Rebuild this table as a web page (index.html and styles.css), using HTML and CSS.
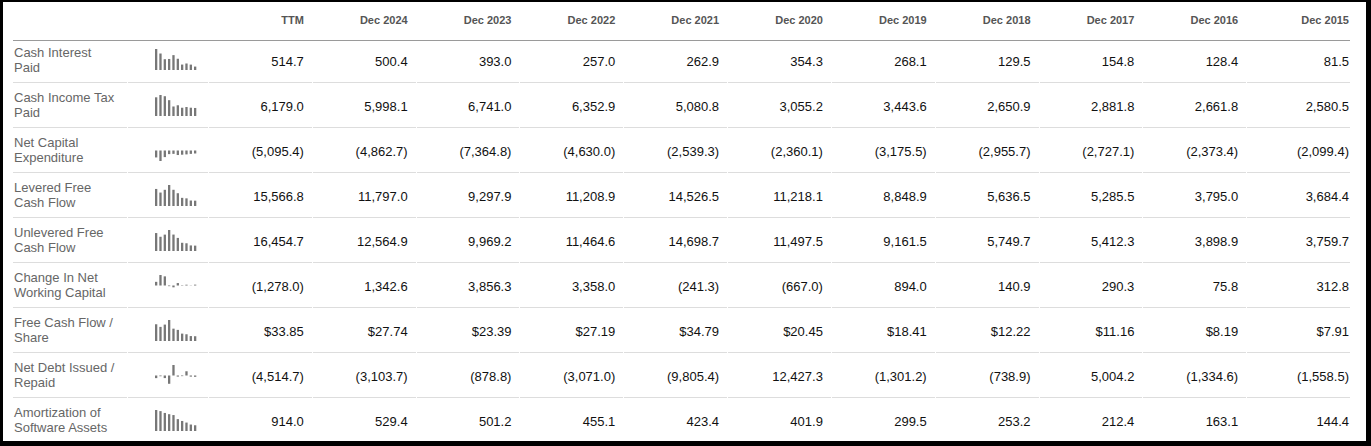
FILE: index.html
```html
<!DOCTYPE html>
<html>
<head>
<meta charset="utf-8">
<title>Cash Flow</title>
<link rel="stylesheet" href="styles.css">
</head>
<body>
<div class="frame">
  <div class="table">
    <div class="row head">
      <div class="h"></div><div class="h"></div>
      <div class="h">TTM</div><div class="h">Dec 2024</div><div class="h">Dec 2023</div><div class="h">Dec 2022</div><div class="h">Dec 2021</div><div class="h">Dec 2020</div><div class="h">Dec 2019</div><div class="h">Dec 2018</div><div class="h">Dec 2017</div><div class="h">Dec 2016</div><div class="h">Dec 2015</div>
    </div>

    <div class="row data first">
      <div class="label">Cash Interest Paid</div>
      <div class="spark"><svg width="44" height="22" viewBox="0 0 44 22"><g fill="#777">
        <rect x="0" y="0" width="2.3" height="21"/><rect x="4.33" y="4.51" width="2.3" height="16.49"/><rect x="8.67" y="10.21" width="2.3" height="10.79"/><rect x="13" y="9.97" width="2.3" height="11.03"/><rect x="17.33" y="6.13" width="2.3" height="14.87"/><rect x="21.67" y="9.75" width="2.3" height="11.25"/><rect x="26" y="15.57" width="2.3" height="5.43"/><rect x="30.33" y="14.5" width="2.3" height="6.5"/><rect x="34.67" y="15.61" width="2.3" height="5.39"/><rect x="39" y="17.58" width="2.3" height="3.42"/>
      </g></svg></div>
      <div class="num">514.7</div><div class="num">500.4</div><div class="num">393.0</div><div class="num">257.0</div><div class="num">262.9</div><div class="num">354.3</div><div class="num">268.1</div><div class="num">129.5</div><div class="num">154.8</div><div class="num">128.4</div><div class="num">81.5</div>
    </div>

    <div class="row data">
      <div class="label">Cash Income Tax Paid</div>
      <div class="spark"><svg width="44" height="22" viewBox="0 0 44 22"><g fill="#777">
        <rect x="0" y="2.31" width="2.3" height="18.69"/><rect x="4.33" y="0" width="2.3" height="21"/><rect x="8.67" y="1.21" width="2.3" height="19.79"/><rect x="13" y="5.17" width="2.3" height="15.83"/><rect x="17.33" y="11.48" width="2.3" height="9.52"/><rect x="21.67" y="10.27" width="2.3" height="10.73"/><rect x="26" y="12.74" width="2.3" height="8.26"/><rect x="30.33" y="12.02" width="2.3" height="8.98"/><rect x="34.67" y="12.71" width="2.3" height="8.29"/><rect x="39" y="12.96" width="2.3" height="8.04"/>
      </g></svg></div>
      <div class="num">6,179.0</div><div class="num">5,998.1</div><div class="num">6,741.0</div><div class="num">6,352.9</div><div class="num">5,080.8</div><div class="num">3,055.2</div><div class="num">3,443.6</div><div class="num">2,650.9</div><div class="num">2,881.8</div><div class="num">2,661.8</div><div class="num">2,580.5</div>
    </div>

    <div class="row data">
      <div class="label">Net Capital Expenditure</div>
      <div class="spark"><svg width="44" height="22" viewBox="0 0 44 22"><g fill="#777">
        <rect x="0" y="10.5" width="2.3" height="6.93"/><rect x="4.33" y="10.5" width="2.3" height="10.5"/><rect x="8.67" y="10.5" width="2.3" height="6.6"/><rect x="13" y="10.5" width="2.3" height="3.62"/><rect x="17.33" y="10.5" width="2.3" height="3.36"/><rect x="21.67" y="10.5" width="2.3" height="4.53"/><rect x="26" y="10.5" width="2.3" height="4.21"/><rect x="30.33" y="10.5" width="2.3" height="3.89"/><rect x="34.67" y="10.5" width="2.3" height="3.38"/><rect x="39" y="10.5" width="2.3" height="2.99"/>
      </g></svg></div>
      <div class="num">(5,095.4)</div><div class="num">(4,862.7)</div><div class="num">(7,364.8)</div><div class="num">(4,630.0)</div><div class="num">(2,539.3)</div><div class="num">(2,360.1)</div><div class="num">(3,175.5)</div><div class="num">(2,955.7)</div><div class="num">(2,727.1)</div><div class="num">(2,373.4)</div><div class="num">(2,099.4)</div>
    </div>

    <div class="row data">
      <div class="label">Levered Free Cash Flow</div>
      <div class="spark"><svg width="44" height="22" viewBox="0 0 44 22"><g fill="#777">
        <rect x="0" y="3.95" width="2.3" height="17.05"/><rect x="4.33" y="7.56" width="2.3" height="13.44"/><rect x="8.67" y="4.8" width="2.3" height="16.2"/><rect x="13" y="0" width="2.3" height="21"/><rect x="17.33" y="4.78" width="2.3" height="16.22"/><rect x="21.67" y="8.21" width="2.3" height="12.79"/><rect x="26" y="12.85" width="2.3" height="8.15"/><rect x="30.33" y="13.36" width="2.3" height="7.64"/><rect x="34.67" y="15.51" width="2.3" height="5.49"/><rect x="39" y="15.67" width="2.3" height="5.33"/>
      </g></svg></div>
      <div class="num">15,566.8</div><div class="num">11,797.0</div><div class="num">9,297.9</div><div class="num">11,208.9</div><div class="num">14,526.5</div><div class="num">11,218.1</div><div class="num">8,848.9</div><div class="num">5,636.5</div><div class="num">5,285.5</div><div class="num">3,795.0</div><div class="num">3,684.4</div>
    </div>

    <div class="row data">
      <div class="label">Unlevered Free Cash Flow</div>
      <div class="spark"><svg width="44" height="22" viewBox="0 0 44 22"><g fill="#777">
        <rect x="0" y="3.05" width="2.3" height="17.95"/><rect x="4.33" y="6.76" width="2.3" height="14.24"/><rect x="8.67" y="4.62" width="2.3" height="16.38"/><rect x="13" y="0" width="2.3" height="21"/><rect x="17.33" y="4.57" width="2.3" height="16.43"/><rect x="21.67" y="7.91" width="2.3" height="13.09"/><rect x="26" y="12.79" width="2.3" height="8.21"/><rect x="30.33" y="13.27" width="2.3" height="7.73"/><rect x="34.67" y="15.43" width="2.3" height="5.57"/><rect x="39" y="15.63" width="2.3" height="5.37"/>
      </g></svg></div>
      <div class="num">16,454.7</div><div class="num">12,564.9</div><div class="num">9,969.2</div><div class="num">11,464.6</div><div class="num">14,698.7</div><div class="num">11,497.5</div><div class="num">9,161.5</div><div class="num">5,749.7</div><div class="num">5,412.3</div><div class="num">3,898.9</div><div class="num">3,759.7</div>
    </div>

    <div class="row data">
      <div class="label">Change In Net Working Capital</div>
      <div class="spark"><svg width="44" height="22" viewBox="0 0 44 22"><g fill="#777">
        <rect x="0" y="6.84" width="2.3" height="3.66"/><rect x="4.33" y="0" width="2.3" height="10.5"/><rect x="8.67" y="1.36" width="2.3" height="9.14"/><rect x="13" y="10.5" width="2.3" height="0.66"/><rect x="17.33" y="10.5" width="2.3" height="1.82"/><rect x="21.67" y="8.07" width="2.3" height="2.43"/><rect x="26" y="10.12" width="2.3" height="0.38"/><rect x="30.33" y="9.71" width="2.3" height="0.79"/><rect x="34.67" y="10.29" width="2.3" height="0.21"/><rect x="39" y="9.65" width="2.3" height="0.85"/>
      </g></svg></div>
      <div class="num">(1,278.0)</div><div class="num">1,342.6</div><div class="num">3,856.3</div><div class="num">3,358.0</div><div class="num">(241.3)</div><div class="num">(667.0)</div><div class="num">894.0</div><div class="num">140.9</div><div class="num">290.3</div><div class="num">75.8</div><div class="num">312.8</div>
    </div>

    <div class="row data">
      <div class="label">Free Cash Flow / Share</div>
      <div class="spark"><svg width="44" height="22" viewBox="0 0 44 22"><g fill="#777">
        <rect x="0" y="4.26" width="2.3" height="16.74"/><rect x="4.33" y="6.88" width="2.3" height="14.12"/><rect x="8.67" y="4.59" width="2.3" height="16.41"/><rect x="13" y="0" width="2.3" height="21"/><rect x="17.33" y="8.66" width="2.3" height="12.34"/><rect x="21.67" y="9.89" width="2.3" height="11.11"/><rect x="26" y="13.62" width="2.3" height="7.38"/><rect x="30.33" y="14.26" width="2.3" height="6.74"/><rect x="34.67" y="16.06" width="2.3" height="4.94"/><rect x="39" y="16.23" width="2.3" height="4.77"/>
      </g></svg></div>
      <div class="num">$33.85</div><div class="num">$27.74</div><div class="num">$23.39</div><div class="num">$27.19</div><div class="num">$34.79</div><div class="num">$20.45</div><div class="num">$18.41</div><div class="num">$12.22</div><div class="num">$11.16</div><div class="num">$8.19</div><div class="num">$7.91</div>
    </div>

    <div class="row data">
      <div class="label">Net Debt Issued / Repaid</div>
      <div class="spark"><svg width="44" height="22" viewBox="0 0 44 22"><g fill="#777">
        <rect x="0" y="10.5" width="2.3" height="2.62"/><rect x="4.33" y="10.5" width="2.3" height="0.74"/><rect x="8.67" y="10.5" width="2.3" height="2.59"/><rect x="13" y="10.5" width="2.3" height="8.28"/><rect x="17.33" y="0" width="2.3" height="10.5"/><rect x="21.67" y="10.5" width="2.3" height="1.1"/><rect x="26" y="10.5" width="2.3" height="0.62"/><rect x="30.33" y="6.27" width="2.3" height="4.23"/><rect x="34.67" y="10.5" width="2.3" height="1.13"/><rect x="39" y="10.5" width="2.3" height="1.32"/>
      </g></svg></div>
      <div class="num">(4,514.7)</div><div class="num">(3,103.7)</div><div class="num">(878.8)</div><div class="num">(3,071.0)</div><div class="num">(9,805.4)</div><div class="num">12,427.3</div><div class="num">(1,301.2)</div><div class="num">(738.9)</div><div class="num">5,004.2</div><div class="num">(1,334.6)</div><div class="num">(1,558.5)</div>
    </div>

    <div class="row data">
      <div class="label">Amortization of Software Assets</div>
      <div class="spark"><svg width="44" height="22" viewBox="0 0 44 22"><g fill="#777">
        <rect x="0" y="0" width="2.3" height="21"/><rect x="4.33" y="1.12" width="2.3" height="19.88"/><rect x="8.67" y="2.95" width="2.3" height="18.05"/><rect x="13" y="4.2" width="2.3" height="16.8"/><rect x="17.33" y="5.06" width="2.3" height="15.94"/><rect x="21.67" y="9.12" width="2.3" height="11.88"/><rect x="26" y="10.96" width="2.3" height="10.04"/><rect x="30.33" y="12.57" width="2.3" height="8.43"/><rect x="34.67" y="14.53" width="2.3" height="6.47"/><rect x="39" y="15.27" width="2.3" height="5.73"/>
      </g></svg></div>
      <div class="num">914.0</div><div class="num">529.4</div><div class="num">501.2</div><div class="num">455.1</div><div class="num">423.4</div><div class="num">401.9</div><div class="num">299.5</div><div class="num">253.2</div><div class="num">212.4</div><div class="num">163.1</div><div class="num">144.4</div>
    </div>
  </div>
</div>
</body>
</html>
```

FILE: styles.css
```css
html, body {
  margin: 0;
  padding: 0;
  background: #000;
  height: 446px;
  overflow: hidden;
}

.frame {
  margin: 2px 5px 0 3px;
  height: 439px;
  background: #fff;
  padding: 0 16px 0 10px;
  overflow: hidden;
  font-family: "Liberation Sans", Arial, sans-serif;
}

.table {
  width: 1337px;
}

.row {
  display: grid;
  grid-template-columns: 114px 80px repeat(11, 1fr);
  column-gap: 1px;
  box-sizing: border-box;
}

.row > div {
  box-sizing: border-box;
  display: flex;
  align-items: center;
}

.head {
  height: 39px;
  border-bottom: 1px solid #9a9a9a;
}

.head .h {
  align-items: flex-end;
  justify-content: flex-end;
  padding: 0 8px 13px 0;
  font-size: 11px;
  line-height: 13px;
  font-weight: bold;
  color: #555;
}

.head .h:last-child {
  padding-right: 1px;
}

.data {
  height: 45px;
}

.data.first {
  height: 42px;
}

.data > div {
  border-bottom: 1px solid #ddd;
}

.label {
  padding: 0 9px 0 1px;
  font-size: 13px;
  line-height: 15px;
  color: #666;
}

.spark {
  padding-left: 27px;
  padding-top: 1px;
}

.spark svg {
  display: block;
}

.num {
  justify-content: flex-end;
  padding-top: 3px;
  padding-right: 8px;
  font-size: 13px;
  line-height: 15px;
  color: #111;
  white-space: nowrap;
}

.num:last-child {
  padding-right: 1px;
}

.data.first .label {
  padding-bottom: 3px;
}

.data.first .spark {
  padding-top: 0;
  padding-bottom: 3px;
}

.data.first .num {
  padding-top: 0;
}
```
